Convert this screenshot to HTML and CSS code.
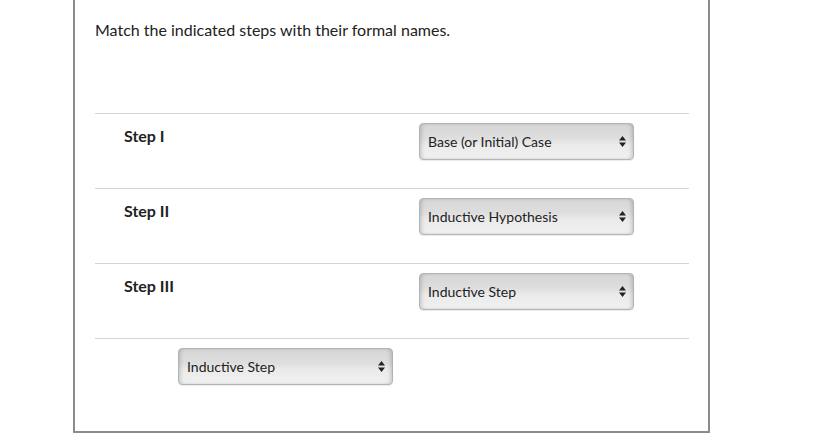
FILE: index.html
```html
<!DOCTYPE html>
<html>
<head>
<meta charset="utf-8">
<link rel="stylesheet" href="styles.css">
</head>
<body>
<div class="panel">
  <p class="prompt">Match the indicated steps with their formal names.</p>
  <div class="rows">
    <div class="row">
      <div class="label">Step I</div>
      <div class="select"><span>Base (or Initial) Case</span><svg class="arrows" width="7" height="11" viewBox="0 0 7 11"><path d="M3.5 0 L7 4.5 H0 Z M3.5 11 L7 6.5 H0 Z" fill="#222"/></svg></div>
    </div>
    <div class="row">
      <div class="label">Step II</div>
      <div class="select"><span>Inductive Hypothesis</span><svg class="arrows" width="7" height="11" viewBox="0 0 7 11"><path d="M3.5 0 L7 4.5 H0 Z M3.5 11 L7 6.5 H0 Z" fill="#222"/></svg></div>
    </div>
    <div class="row">
      <div class="label">Step III</div>
      <div class="select"><span>Inductive Step</span><svg class="arrows" width="7" height="11" viewBox="0 0 7 11"><path d="M3.5 0 L7 4.5 H0 Z M3.5 11 L7 6.5 H0 Z" fill="#222"/></svg></div>
    </div>
    <div class="row last">
      <div class="select"><span>Inductive Step</span><svg class="arrows" width="7" height="11" viewBox="0 0 7 11"><path d="M3.5 0 L7 4.5 H0 Z M3.5 11 L7 6.5 H0 Z" fill="#222"/></svg></div>
    </div>
  </div>
</div>
</body>
</html>
```
FILE: styles.css
```css
html, body {
  margin: 0;
  padding: 0;
  background: #fff;
}
body {
  font-family: Lato, "Liberation Sans", sans-serif;
  color: #222;
}
.panel {
  margin-left: 73px;
  width: 594px;
  height: 431px;
  border: 2px solid #8c8c8c;
  border-top: none;
  padding: 0 19px 0 20px;
  box-sizing: content-box;
}
.prompt {
  margin: 0;
  padding-top: 20px;
  height: 113px;
  box-sizing: border-box;
  font-size: 16px;
  line-height: 20px;
  color: #222;
}
.rows {
  width: 594px;
}
.row {
  height: 75px;
  border-top: 1px solid #d4d4d4;
  box-sizing: border-box;
  display: flex;
  align-items: flex-start;
  padding-top: 9px;
}
.label {
  width: 295px;
  padding-left: 29px;
  padding-top: 3px;
  font-size: 16px;
  font-weight: 700;
  line-height: 20px;
  color: #222;
}
.select {
  width: 215px;
  height: 37px;
  box-sizing: border-box;
  border: 1px solid #b4b4b4;
  border-radius: 4px;
  background: linear-gradient(to bottom, #d6d6d6 0%, #dedede 40%, #ebebeb 60%, #f0f0f0 100%);
  box-shadow: inset 3px 0 4px -2px rgba(0,0,0,0.2), inset -3px 0 4px -2px rgba(0,0,0,0.2), 0 1px 1px rgba(0,0,0,0.08);
  display: flex;
  align-items: center;
  justify-content: space-between;
  padding: 0 7px 0 8px;
  font-size: 14px;
  color: #222;
}
.row.last {
  padding-left: 83px;
}
.arrows {
  display: block;
}
```
